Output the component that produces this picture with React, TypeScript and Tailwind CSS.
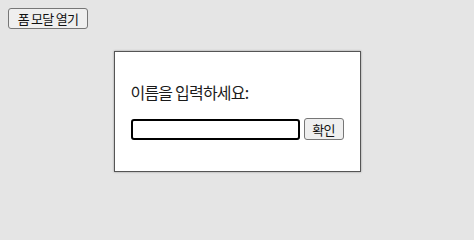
import React from "react";

export default function App() {
  const font = { fontFamily: '"Noto Sans CJK KR", "Noto Sans", sans-serif' };
  return (
    <div className="w-full min-h-screen bg-[#e5e5e5]" style={font}>
      <div className="w-[474px] h-[223px] relative overflow-hidden">
        <div className="p-2">
          <button className="h-[21px] w-[80px] bg-[#efefef] border border-[#767676] rounded-[3px] text-[13px] tracking-[-0.7px] leading-none text-[#111] flex items-center justify-center">
            폼 모달 열기
          </button>
        </div>
        <div className="absolute inset-0 flex items-center justify-center">
          <div className="w-[247px] h-[121px] bg-white border border-[#555] shadow-[0_0_2px_rgba(0,0,0,0.35)] px-4 pt-[28px]">
            <p className="text-[16px] tracking-[-0.8px] leading-[24px] text-[#1a1a1a]">이름을 입력하세요:</p>
            <div className="flex items-center gap-[4px] mt-[14px]">
              <input className="w-[169px] h-[21px] border-2 border-black rounded-[3px] bg-white outline-none" />
              <button className="h-[22px] w-[40px] bg-[#efefef] border border-[#767676] rounded-[3px] text-[13px] tracking-[-0.7px] leading-none text-[#111] flex items-center justify-center">
                확인
              </button>
            </div>
          </div>
        </div>
      </div>
    </div>
  );
}
